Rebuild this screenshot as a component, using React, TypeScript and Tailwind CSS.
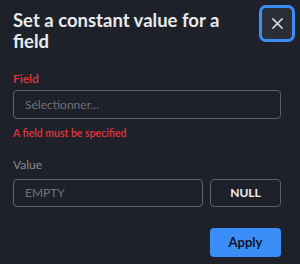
import React from "react";

export default function App() {
  return (
    <div
      className="w-[300px] h-[264px] bg-[#1e2129] overflow-hidden relative"
      style={{ fontFamily: "Lato, 'Noto Sans', sans-serif" }}
    >
      <div className="flex items-start justify-between pl-[13px] pr-[5px]">
        <h2 className="mt-[10px] w-[236px] text-[18.5px] leading-[21px] font-bold text-[#e8eaee]">
          Set a constant value for a field
        </h2>
        <button className="mt-[5px] w-[36px] h-[37px] rounded-[7px] border-[3px] border-[#3a8ef5] bg-[#2b2e37] flex items-center justify-center text-[#d6d8dd]">
          <svg width="13" height="13" viewBox="0 0 14 14" fill="none" stroke="currentColor" strokeWidth="1.6" strokeLinecap="round">
            <path d="M2 2 L12 12 M12 2 L2 12" />
          </svg>
        </button>
      </div>
      <div className="px-[13px] pr-[19px]">
        <div className="mt-[20px] text-[12px] leading-[14px] font-semibold text-[#e5343f]">Field</div>
        <div className="mt-[4px] h-[29px] rounded-[4px] border border-[#5b606a] flex items-center px-[11px] text-[12px] text-[#6e737d]">
          Sélectionner...
        </div>
        <div className="mt-[8px] text-[10.5px] leading-[12px] font-semibold text-[#e5343f]">A field must be specified</div>
        <div className="mt-[19px] text-[12px] leading-[14px] text-[#878c96]">Value</div>
        <div className="mt-[7px] flex gap-[7px]">
          <div className="flex-1 h-[28px] rounded-[4px] border border-[#5b606a] flex items-center px-[11px] text-[12px] text-[#6e737d]">
            EMPTY
          </div>
          <button className="w-[71px] h-[28px] rounded-[4px] border border-[#5b606a] flex items-center justify-center text-[12px] font-bold text-[#eef0f3]">
            NULL
          </button>
        </div>
        <div className="mt-[21px] flex justify-end">
          <button className="w-[71px] h-[29px] rounded-[4px] bg-[#3a8ef6] flex items-center justify-center text-[13px] font-bold text-[#10141c]">
            Apply
          </button>
        </div>
      </div>
    </div>
  );
}
